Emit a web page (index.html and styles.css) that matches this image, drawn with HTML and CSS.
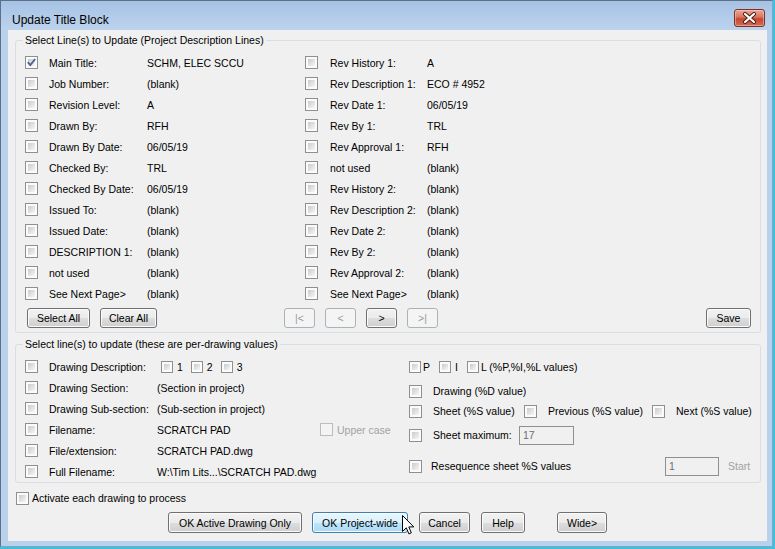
FILE: index.html
```html
<!DOCTYPE html>
<html>
<head>
<meta charset="utf-8">
<title>Update Title Block</title>
<link rel="stylesheet" href="styles.css">
</head>
<body>
<div class="window">
  <div class="titlebar">
    <span class="title">Update Title Block</span>
    <div class="close">
      <svg width="15" height="12" viewBox="0 0 15 12">
        <path d="M3 2 L12 10 M12 2 L3 10" stroke="#4a1a14" stroke-width="4" stroke-linecap="round"/>
        <path d="M3 2 L12 10 M12 2 L3 10" stroke="#ffffff" stroke-width="2.2" stroke-linecap="round"/>
      </svg>
    </div>
  </div>
  <div class="client">
    <fieldset class="group g1">
      <legend>Select Line(s) to Update (Project Description Lines)</legend>
      <div class="grid1">
        <span class="cb checked"><svg width="11" height="11" viewBox="0 0 11 11"><path d="M1.8 5.2 L4.3 8 L9.2 2" fill="none" stroke="#4b5f94" stroke-width="1.8"/></svg></span><span>Main Title:</span><span>SCHM, ELEC SCCU</span><span class="cb"></span><span>Rev History 1:</span><span>A</span>
        <span class="cb"></span><span>Job Number:</span><span>(blank)</span><span class="cb"></span><span>Rev Description 1:</span><span>ECO # 4952</span>
        <span class="cb"></span><span>Revision Level:</span><span>A</span><span class="cb"></span><span>Rev Date 1:</span><span>06/05/19</span>
        <span class="cb"></span><span>Drawn By:</span><span>RFH</span><span class="cb"></span><span>Rev By 1:</span><span>TRL</span>
        <span class="cb"></span><span>Drawn By Date:</span><span>06/05/19</span><span class="cb"></span><span>Rev Approval 1:</span><span>RFH</span>
        <span class="cb"></span><span>Checked By:</span><span>TRL</span><span class="cb"></span><span>not used</span><span>(blank)</span>
        <span class="cb"></span><span>Checked By Date:</span><span>06/05/19</span><span class="cb"></span><span>Rev History 2:</span><span>(blank)</span>
        <span class="cb"></span><span>Issued To:</span><span>(blank)</span><span class="cb"></span><span>Rev Description 2:</span><span>(blank)</span>
        <span class="cb"></span><span>Issued Date:</span><span>(blank)</span><span class="cb"></span><span>Rev Date 2:</span><span>(blank)</span>
        <span class="cb"></span><span>DESCRIPTION 1:</span><span>(blank)</span><span class="cb"></span><span>Rev By 2:</span><span>(blank)</span>
        <span class="cb"></span><span>not used</span><span>(blank)</span><span class="cb"></span><span>Rev Approval 2:</span><span>(blank)</span>
        <span class="cb"></span><span>See Next Page&gt;</span><span>(blank)</span><span class="cb"></span><span>See Next Page&gt;</span><span>(blank)</span>
      </div>
      <div class="btnrow">
        <div class="btn w-select">Select All</div>
        <div class="btn w-clear">Clear All</div>
        <div class="btn nav nav-first disabled">|&lt;</div>
        <div class="btn nav disabled">&lt;</div>
        <div class="btn nav">&gt;</div>
        <div class="btn nav disabled">&gt;|</div>
        <div class="btn w-save">Save</div>
      </div>
    </fieldset>

    <fieldset class="group g2">
      <legend>Select line(s) to update (these are per-drawing values)</legend>
      <div class="g2body">
        <div class="g2left">
          <span class="cb"></span><span>Drawing Description:</span>
          <span class="desc"><span class="cb small"></span><span class="num">1</span><span class="cb small"></span><span class="num">2</span><span class="cb small"></span><span class="num">3</span></span>
          <span class="cb"></span><span>Drawing Section:</span><span>(Section in project)</span>
          <span class="cb"></span><span>Drawing Sub-section:</span><span>(Sub-section in project)</span>
          <span class="cb"></span><span>Filename:</span>
          <span class="fname"><span class="fval">SCRATCH PAD</span><span class="cb off"></span><span class="dis upper">Upper case</span></span>
          <span class="cb"></span><span>File/extension:</span><span>SCRATCH PAD.dwg</span>
          <span class="cb"></span><span>Full Filename:</span><span>W:\Tim Lits...\SCRATCH PAD.dwg</span>
        </div>
        <div class="g2right">
          <div class="rrow r1"><span class="cb small"></span><span class="t-p">P</span><span class="cb small ml9"></span><span class="t-i">I</span><span class="cb small ml9"></span><span class="t-l">L (%P,%I,%L values)</span></div>
          <div class="rrow r2"><span class="cb"></span><span class="lbl">Drawing (%D value)</span></div>
          <div class="rrow r3"><span class="cb"></span><span class="lbl w-sheet">Sheet (%S value)</span><span class="cb"></span><span class="lbl w-prev">Previous (%S value)</span><span class="cb"></span><span class="lbl">Next (%S value)</span></div>
          <div class="rrow r4"><span class="cb"></span><span class="lbl w-max">Sheet maximum:</span><span class="field w-f1">17</span></div>
          <div class="rrow r5"><span class="cb"></span><span class="lbl2 w-reseq">Resequence sheet %S values</span><span class="field w-f2">1</span><span class="dis start">Start</span></div>
        </div>
      </div>
    </fieldset>

    <div class="activate"><span class="cb"></span><span class="act-t">Activate each drawing to process</span></div>

    <div class="bottom">
      <div class="btn b-active">OK Active Drawing Only</div>
      <div class="btn hot b-proj">OK Project-wide</div>
      <div class="btn b-cancel">Cancel</div>
      <div class="btn b-help">Help</div>
      <div class="btn b-wide">Wide&gt;</div>
    </div>
  </div>
  <svg class="cursor" width="13" height="21" viewBox="0 0 13 21">
    <path d="M0.5 0.5 L0.5 16.5 L4.3 12.8 L6.9 18.9 L9.3 17.9 L6.8 11.9 L11.8 11.9 Z" fill="#ffffff" stroke="#000000" stroke-width="1" stroke-linejoin="miter"/>
  </svg>
</div>
</body>
</html>
```

FILE: styles.css
```css
* { box-sizing: border-box; }
html, body { margin: 0; padding: 0; }
body {
  width: 775px;
  height: 549px;
  overflow: hidden;
  background: #3ac2e3;
  font-family: "Liberation Sans", Arial, sans-serif;
  font-size: 10.5px;
  color: #000;
}
.window {
  position: relative;
  width: 773px;
  height: 547px;
  background: #b9d1ea;
  border: 1px solid #8aa3bf;
  border-left-color: #5d7088;
  border-top-color: #5d7088;
  display: flex;
  flex-direction: column;
}
.titlebar {
  height: 29px;
  flex: none;
  display: flex;
  align-items: flex-start;
  justify-content: space-between;
  background: linear-gradient(#a6c2e4, #bcd3ed);
}
.title {
  margin: 12px 0 0 11px;
  font-size: 12px;
  line-height: 14px;
}
.close {
  margin: 8px 7px 0 0;
  width: 31px;
  height: 18px;
  border: 1px solid #7b3328;
  border-radius: 3px;
  background: linear-gradient(#eaa899 0%, #d9725f 45%, #c5472f 55%, #d46b52 100%);
  box-shadow: inset 0 0 0 1px rgba(255, 220, 210, 0.45);
  display: flex;
  align-items: center;
  justify-content: center;
}
.client {
  flex: 1;
  margin: 0 5px 5px 7px;
  background: #f0f0f0;
  padding: 4px 6px 0 7px;
}
.group {
  margin: 0;
  padding: 0 9px;
  border: 1px solid #d5dfe5;
  border-radius: 3px;
  min-width: 0;
}
.group legend {
  padding: 0 2px;
  margin-left: -2px;
  line-height: 13px;
  height: 13px;
  white-space: nowrap;
}
.grid1 {
  display: grid;
  grid-template-columns: 24px 98px 158px 25px 97px 1fr;
  grid-auto-rows: 21px;
  align-items: center;
  padding-top: 5px;
  white-space: nowrap;
}
.cb {
  display: inline-block;
  flex: none;
  width: 13px;
  height: 13px;
  border: 1px solid #8e8f8f;
  padding: 2px;
  background: linear-gradient(135deg, #cbcbcb, #f6f6f6) content-box, #fbfbfb;
  position: relative;
}
.cb.small { width: 12px; height: 12px; }
.cb.checked svg { position: absolute; left: 0; top: 0; }
.cb.off {
  border-color: #bcbcbc;
  background: #f4f4f4;
}
.btnrow {
  display: flex;
  align-items: center;
  margin-top: 4px;
  padding: 0 0 4px 2px;
}
.btn {
  height: 20px;
  flex: none;
  display: flex;
  align-items: center;
  justify-content: center;
  border: 1px solid #707070;
  border-radius: 3px;
  background: linear-gradient(#f2f2f2 0%, #ebebeb 50%, #dddddd 51%, #cfcfcf 100%);
  box-shadow: inset 0 0 0 1px #fbfbfb;
  white-space: nowrap;
}
.btn.disabled {
  border-color: #adb2b5;
  background: #f4f4f4;
  box-shadow: none;
  color: #9a9a9a;
}
.btn.hot {
  border-color: #3c7fb1;
  background: linear-gradient(#eaf6fd 0%, #d9f0fc 50%, #bee6fd 51%, #a7d9f5 100%);
}
.w-select { width: 63px; }
.w-clear { width: 57px; margin-left: 10px; }
.nav { width: 31px; margin-left: 10px; }
.nav.nav-first { margin-left: 127px; }
.w-save { width: 45px; margin-left: auto; }

.g2 { margin-top: 5px; }
.g2body {
  display: flex;
  padding-top: 5px;
  white-space: nowrap;
}
.g2left {
  width: 384px;
  flex: none;
  display: grid;
  grid-template-columns: 24px 108px 1fr;
  grid-auto-rows: 21px;
  align-items: center;
}
.desc, .fname { display: flex; align-items: center; }
.desc .cb.small { margin-left: 4px; }
.desc .num { margin: 0 4px 0 4px; }
.fval { width: 163px; }
.dis { color: #a2a2a2; }
.upper { margin-left: 4px; }
.g2right {
  flex: 1;
  display: flex;
  flex-direction: column;
}
.rrow {
  height: 20px;
  display: flex;
  align-items: center;
}
.r1 { margin-top: 1px; }
.r2 { margin-top: 4px; }
.r3 { margin-top: 0; }
.r4 { margin-top: 4px; }
.r5 { margin-top: 11px; }
.t-p { margin-left: 2px; }
.t-i { margin-left: 4px; }
.t-l { margin-left: 2px; }
.ml9 { margin-left: 9px; }
.lbl { margin-left: 11px; }
.lbl2 { margin-left: 9px; }
.w-sheet { width: 91px; }
.w-prev { width: 104px; }
.w-max { width: 86px; }
.w-reseq { width: 234px; }
.field {
  height: 19px;
  border: 1px solid #8f8f8f;
  background: #f0f0f0;
  color: #6d6d6d;
  padding-left: 3px;
  display: flex;
  align-items: center;
}
.w-f1 { width: 55px; }
.w-f2 { width: 54px; }
.start { margin-left: 9px; }
.activate {
  display: flex;
  align-items: center;
  height: 16px;
  margin: 7px 0 0 1px;
}
.act-t { margin-left: 3px; }
.bottom {
  display: flex;
  margin-top: 6px;
  padding-left: 153px;
}
.bottom .btn { height: 21px; }
.b-active { width: 134px; }
.b-proj { width: 96px; margin-left: 10px; }
.b-cancel { width: 51px; margin-left: 11px; }
.b-help { width: 44px; margin-left: 11px; }
.b-wide { width: 50px; margin-left: 32px; }
.cursor {
  position: absolute;
  left: 401px;
  top: 514px;
}
```
